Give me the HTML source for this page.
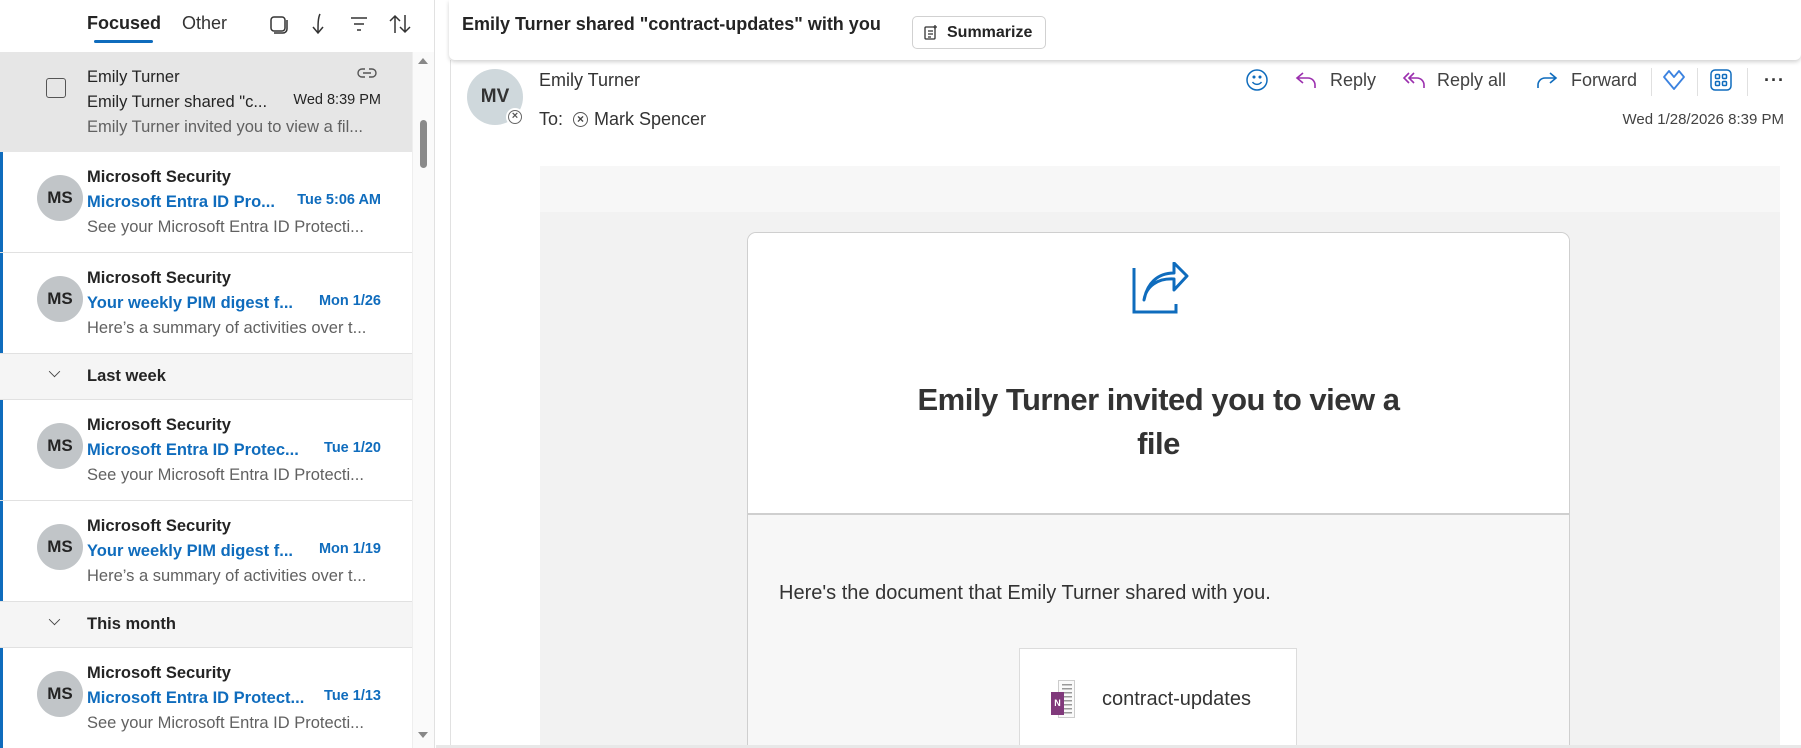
<!DOCTYPE html>
<html><head><meta charset="utf-8"><style>
*{box-sizing:border-box;margin:0;padding:0}
html,body{width:1801px;height:748px;overflow:hidden}
body{background:#fff;font-family:"Liberation Sans",sans-serif;color:#242424;position:relative}
.abs{position:absolute}
#left{position:absolute;left:0;top:0;width:435px;height:748px;border-right:1px solid #e1e1e1;overflow:hidden}
.tab{position:absolute;top:13px;font-size:18px}
.item{position:absolute;left:0;width:412px;height:101px;border-bottom:1px solid #e1e1e1;background:#fff}
.item.unread{box-shadow:inset 3px 0 0 #0f6cbd}
.av{position:absolute;left:37px;top:23px;width:46px;height:46px;border-radius:50%;background:#c1c5c8;font-size:17px;font-weight:bold;color:#242424;text-align:center;line-height:46px}
.l{position:absolute;left:87px;font-size:16.5px;line-height:25px;white-space:nowrap}
.l1{top:13px;font-weight:bold}
.l2{top:38px;color:#0f6cbd;font-weight:bold}
.l3{top:63px;color:#616161}
.dt{position:absolute;right:31px;top:40px;font-size:14.5px;color:#0f6cbd;font-weight:bold}
.sec{position:absolute;left:0;width:412px;height:46px;background:#f5f5f5;border-bottom:1px solid #e1e1e1}
.sec span{position:absolute;left:87px;top:13px;font-size:16.5px;font-weight:bold}
.sec i{position:absolute;left:50px;top:13px;width:9px;height:9px;border-right:1.5px solid #444;border-bottom:1.5px solid #444;transform:rotate(45deg) scale(.9)}
.act{position:absolute;top:70px;font-size:18px;color:#424242}
</style></head><body>
<div id="left">
 <div class="tab" style="left:87px;font-weight:bold">Focused</div>
 <div class="abs" style="left:94px;top:40px;width:59px;height:3px;background:#0f6cbd;border-radius:2px"></div>
 <div class="tab" style="left:182px;color:#333">Other</div>
 <svg class="abs" style="left:268px;top:14px" width="22" height="22" viewBox="0 0 22 22" fill="none" stroke="#333" stroke-width="1.5"><rect x="3" y="3" width="14" height="14" rx="3"/><path d="M19 6v9a4 4 0 0 1-4 4H6"/></svg>
 <svg class="abs" style="left:308px;top:12px" width="20" height="24" viewBox="0 0 20 24" fill="none" stroke="#333" stroke-width="1.5"><path d="M12 2c-2 4-2 10-2 18M5 15l5 6 5-6"/></svg>
 <svg class="abs" style="left:349px;top:14px" width="20" height="20" viewBox="0 0 20 20" stroke="#333" stroke-width="1.5"><path d="M2 4h16M5 10h10M8 16h4"/></svg>
 <svg class="abs" style="left:388px;top:13px" width="24" height="22" viewBox="0 0 24 22" fill="none" stroke="#333" stroke-width="1.5"><path d="M7 20V3M2 8l5-5 5 5M17 2v17M12 14l5 5 5-5"/></svg>

 <div class="item" style="top:52px;height:100px;background:#e6e6e6;border-bottom:none">
  <div class="abs" style="left:46px;top:26px;width:20px;height:20px;border:1.5px solid #555;border-radius:3px"></div>
  <div class="l" style="top:13px">Emily Turner</div>
  <div class="l" style="top:38px">Emily Turner shared "c...</div>
  <div class="l l3">Emily Turner invited you to view a fil...</div>
  <svg class="abs" style="left:357px;top:14px" width="20" height="14" viewBox="0 0 20 14" fill="none" stroke="#555" stroke-width="1.4"><path d="M8 3H5a4 4 0 0 0 0 8h3M12 3h3a4 4 0 0 1 0 8h-3M6 7h8"/></svg>
  <div class="dt" style="color:#242424;font-weight:normal">Wed 8:39 PM</div>
 </div>
 <div class="item unread" style="top:152px"><div class="av">MS</div><div class="l l1">Microsoft Security</div><div class="l l2">Microsoft Entra ID Pro...</div><div class="l l3">See your Microsoft Entra ID Protecti...</div><div class="dt">Tue 5:06 AM</div></div>
 <div class="item unread" style="top:253px"><div class="av">MS</div><div class="l l1">Microsoft Security</div><div class="l l2">Your weekly PIM digest f...</div><div class="l l3">Here’s a summary of activities over t...</div><div class="dt">Mon 1/26</div></div>
 <div class="sec" style="top:354px"><i></i><span>Last week</span></div>
 <div class="item unread" style="top:400px"><div class="av">MS</div><div class="l l1">Microsoft Security</div><div class="l l2">Microsoft Entra ID Protec...</div><div class="l l3">See your Microsoft Entra ID Protecti...</div><div class="dt">Tue 1/20</div></div>
 <div class="item unread" style="top:501px"><div class="av">MS</div><div class="l l1">Microsoft Security</div><div class="l l2">Your weekly PIM digest f...</div><div class="l l3">Here’s a summary of activities over t...</div><div class="dt">Mon 1/19</div></div>
 <div class="sec" style="top:602px"><i></i><span>This month</span></div>
 <div class="item unread" style="top:648px;height:100px;border-bottom:none"><div class="av">MS</div><div class="l l1">Microsoft Security</div><div class="l l2">Microsoft Entra ID Protect...</div><div class="l l3">See your Microsoft Entra ID Protecti...</div><div class="dt">Tue 1/13</div></div>
 <div class="abs" style="left:412px;top:52px;width:22px;height:696px;background:#fafafa;border-left:1px solid #eee"></div>
 <div class="abs" style="left:418px;top:58px;width:0;height:0;border:5px solid transparent;border-bottom:6px solid #888;border-top:none"></div>
 <div class="abs" style="left:420px;top:120px;width:7px;height:48px;background:#8a8a8a;border-radius:4px"></div>
 <div class="abs" style="left:418px;top:732px;width:0;height:0;border:5px solid transparent;border-top:6px solid #888;border-bottom:none"></div>
</div>

<div class="abs" style="left:449px;top:0;width:1352px;height:60px;background:#fff;border-radius:0 0 6px 6px;box-shadow:0 2px 4px rgba(0,0,0,.18);z-index:2"></div>
<div class="abs" style="left:462px;top:14px;font-size:18px;font-weight:bold;z-index:3">Emily Turner shared "contract-updates" with you</div>
<div class="abs" style="left:912px;top:16px;width:134px;height:33px;border:1px solid #d1d1d1;border-radius:5px;z-index:3;font-size:16px;font-weight:bold;line-height:31px;padding-left:34px">Summarize</div>
<svg class="abs" style="left:923px;top:24px;z-index:4" width="16" height="16" viewBox="0 0 16 16" fill="none" stroke="#333" stroke-width="1.3"><rect x="2" y="3" width="10" height="12" rx="1"/><path d="M5 7h5M5 10h5M5 13h3M12 1v4M10 3h4"/></svg>

<div class="abs" style="left:450px;top:60px;width:1px;height:688px;background:#e1e1e1"></div>
<div class="abs" style="left:467px;top:69px;width:56px;height:56px;border-radius:50%;background:#cfd8dc;font-size:19px;font-weight:bold;color:#333;text-align:center;line-height:56px">MV</div>
<div class="abs" style="left:506px;top:108px;width:18px;height:18px;border-radius:50%;background:#fff"></div>
<div class="abs" style="left:508px;top:110px;width:14px;height:14px;border-radius:50%;border:1.5px solid #666;font-size:11px;line-height:11px;text-align:center;color:#555;font-weight:bold">×</div>
<div class="abs" style="left:539px;top:70px;font-size:18px;color:#333">Emily Turner</div>
<div class="abs" style="left:539px;top:109px;font-size:18px;color:#333">To:</div>
<div class="abs" style="left:573px;top:112px;width:15px;height:15px;border-radius:50%;border:1.5px solid #555;font-size:12px;line-height:12px;text-align:center;color:#444;font-weight:bold">×</div>
<div class="abs" style="left:594px;top:109px;font-size:18px;color:#333">Mark Spencer</div>
<div class="abs" style="right:17px;top:111px;font-size:15px;color:#424242">Wed 1/28/2026 8:39 PM</div>

<svg class="abs" style="left:1245px;top:68px" width="24" height="24" viewBox="0 0 24 24" fill="none" stroke="#0f6cbd" stroke-width="1.5"><circle cx="12" cy="12" r="10"/><circle cx="9" cy="9" r=".8" fill="#0f6cbd"/><circle cx="15" cy="9" r=".8" fill="#0f6cbd"/><path d="M7.5 14a5.5 5.5 0 0 0 9 0"/></svg>
<svg class="abs" style="left:1295px;top:70px" width="24" height="20" viewBox="0 0 24 20" fill="none" stroke="#9b2fae" stroke-width="1.6"><path d="M8 3L2 8l6 5M2 8h11a7 7 0 0 1 7 7v3"/></svg>
<div class="act" style="left:1330px">Reply</div>
<svg class="abs" style="left:1402px;top:70px" width="26" height="20" viewBox="0 0 26 20" fill="none" stroke="#9b2fae" stroke-width="1.6"><path d="M7 3L2 8l5 5M12 3L7 8l5 5M7 8h8a7 7 0 0 1 7 7v3"/></svg>
<div class="act" style="left:1437px">Reply all</div>
<svg class="abs" style="left:1534px;top:70px" width="24" height="20" viewBox="0 0 24 20" fill="none" stroke="#0f6cbd" stroke-width="1.6"><path d="M16 3l6 5-6 5M22 8H11a7 7 0 0 0-7 7v3"/></svg>
<div class="act" style="left:1571px">Forward</div>
<div class="abs" style="left:1651px;top:68px;width:1px;height:28px;background:#e0e0e0"></div>
<svg class="abs" style="left:1662px;top:69px" width="24" height="22" viewBox="0 0 24 22" fill="none" stroke="#3b82e0" stroke-width="1.8" stroke-linejoin="round"><path d="M7 2l-5 6 10 12 10-12-5-6-5 6z"/></svg>
<div class="abs" style="left:1697px;top:68px;width:1px;height:28px;background:#e0e0e0"></div>
<svg class="abs" style="left:1709px;top:68px" width="24" height="24" viewBox="0 0 24 24" fill="none" stroke="#0f6cbd" stroke-width="1.5"><rect x="2" y="2" width="20" height="20" rx="4"/><rect x="6.5" y="6.5" width="4" height="4" rx="1"/><rect x="13.5" y="6.5" width="4" height="4" rx="1"/><rect x="6.5" y="13.5" width="4" height="4" rx="1"/><rect x="13.5" y="13.5" width="4" height="4" rx="1"/></svg>
<div class="abs" style="left:1747px;top:68px;width:1px;height:28px;background:#e0e0e0"></div>
<div class="abs" style="left:1764px;top:70px;font-size:18px;font-weight:bold;color:#333;letter-spacing:1px">···</div>

<div class="abs" style="left:540px;top:166px;width:1240px;height:579px;background:#f2f2f2"></div>
<div class="abs" style="left:540px;top:166px;width:1240px;height:46px;background:#f7f7f7"></div>
<div class="abs" style="left:747px;top:232px;width:823px;height:513px;background:#f7f7f7;border:1px solid #cfcfcf;border-bottom:none;border-radius:9px 9px 0 0;overflow:hidden">
 <div style="height:282px;background:#fff;border-bottom:2px solid #cfcfcf"></div>
</div>
<svg class="abs" style="left:1131px;top:262px" width="58" height="52" viewBox="0 0 58 52" fill="none" stroke="#0f6cbd" stroke-width="3"><path d="M3 6v44h42v-8"/><path d="M13 38c2-14 14-22 30-21v11l13-14L43 1v10C26 11 16 22 13 38z" stroke-linejoin="round"/></svg>
<div class="abs" style="left:747px;top:378px;width:823px;text-align:center;font-size:31px;line-height:44px;font-weight:bold;color:#333;letter-spacing:-0.5px">Emily Turner invited you to view a<br>file</div>
<div class="abs" style="left:779px;top:582px;font-size:20px;color:#333">Here's the document that Emily Turner shared with you.</div>
<div class="abs" style="left:1019px;top:648px;width:278px;height:97px;background:#fff;border:1px solid #dcdcdc;border-bottom:none"></div>
<div class="abs" style="left:1058px;top:680px;width:17px;height:38px;background:#fafafa;border:1px solid #ccc"></div>
<div class="abs" style="left:1062px;top:684px;width:10px;height:30px;background:repeating-linear-gradient(#999 0 1.5px,transparent 1.5px 4px)"></div>
<div class="abs" style="left:1051px;top:692px;width:13px;height:23px;background:#80397b;color:#fff;font-size:9px;font-weight:bold;text-align:center;line-height:23px">N</div>
<div class="abs" style="left:1102px;top:688px;font-size:20px;color:#333">contract-updates</div>
<div class="abs" style="left:436px;top:745px;width:1365px;height:3px;background:#e8e8e8;z-index:5"></div>
</body></html>
